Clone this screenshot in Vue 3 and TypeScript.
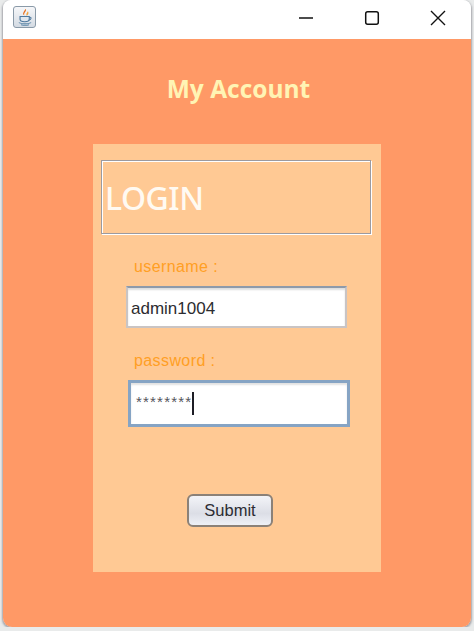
<script setup lang="ts">
const title = 'My Account'
</script>

<template>
  <div class="window">
    <header class="titlebar">
      <div class="app-icon">
        <svg width="18" height="18" viewBox="0 0 16 16">
          <path d="M8.6 0.6C10 3 6.4 3.8 7.4 6.6 4.9 5 7.4 2.8 8.6 0.6Z" fill="#e8701f" />
          <path d="M10.6 2.8C9.8 4.2 8.8 5 9.4 6.8 11 6 11.6 4.2 10.6 2.8Z" fill="#f2a23c" />
          <path d="M3.6 7.6h8.2v2.4c0 1.5-1.4 2.2-4.1 2.2s-4.1-.7-4.1-2.2Z" fill="#dfe6ed" stroke="#4f7a9f" stroke-width="1" />
          <path d="M11.8 8.2c2.2-.4 2.2 2-.4 2.6" fill="none" stroke="#4f7a9f" stroke-width=".9" />
          <path d="M2.5 13c3 1.2 8 1.2 11 0M4.5 14.8c2.4.6 5 .6 7 0" fill="none" stroke="#5c86a8" stroke-width=".9" />
        </svg>
      </div>
      <div class="controls">
        <svg class="ctl-min" width="16" height="16" viewBox="0 0 16 16"><path d="M1 8h14" stroke="#111" stroke-width="1.4" /></svg>
        <svg class="ctl-max" width="16" height="16" viewBox="0 0 16 16"><rect x="1.7" y="1.7" width="12.6" height="12.6" rx="2" fill="none" stroke="#111" stroke-width="1.5" /></svg>
        <svg class="ctl-close" width="16" height="16" viewBox="0 0 16 16"><path d="M1 1l14 14M15 1 1 15" stroke="#111" stroke-width="1.4" /></svg>
      </div>
    </header>

    <main class="content">
      <h1 class="heading">{{ title }}</h1>
      <section class="panel">
        <div class="login-box"><span>LOGIN</span></div>
        <label class="field-label first">username :</label>
        <div class="input user"><span>admin1004</span></div>
        <label class="field-label second">password :</label>
        <div class="input pass"><span class="stars">********</span><i class="caret"></i></div>
        <button class="submit" type="button">Submit</button>
      </section>
    </main>
  </div>
</template>

<style scoped>
.window {
  width: 468px;
  height: 627px;
  margin: 0 3px;
  display: flex;
  flex-direction: column;
  border-radius: 8px 8px 9px 9px;
  overflow: hidden;
  box-shadow: 0 1px 2px 1px rgba(110, 110, 120, 0.55);
}
.titlebar {
  height: 39px;
  flex: none;
  background: #fff;
  display: flex;
  align-items: center;
  justify-content: space-between;
  padding-left: 10px;
}
.app-icon {
  width: 23px;
  height: 22px;
  box-sizing: border-box;
  margin-bottom: 5px;
  border: 1px solid #8a9aa8;
  border-radius: 3px;
  background: linear-gradient(#f6f7f9, #d4dbe3);
  display: flex;
  align-items: center;
  justify-content: center;
}
.controls {
  display: flex;
  align-items: center;
  padding-right: 25px;
  margin-bottom: 4px;
}
.ctl-max { margin-left: 50px; }
.ctl-close { margin-left: 50px; }
.content {
  flex: 1;
  background: #ff9966;
  display: flex;
  flex-direction: column;
  align-items: center;
}
.heading {
  margin: 31px 0 0 3px;
  height: 38px;
  line-height: 38px;
  font-family: "Open Sans", "Noto Sans", sans-serif;
  font-size: 24.5px;
  font-weight: 700;
  color: #fff4b4;
}
.panel {
  width: 288px;
  height: 428px;
  margin: 36px 0 0;
  box-sizing: border-box;
  padding: 16px 0 0 8px;
  background: #ffc994;
  display: flex;
  flex-direction: column;
  align-items: flex-start;
}
.login-box {
  width: 270px;
  height: 74px;
  box-sizing: border-box;
  flex: none;
  border: 1px solid #9d9a9e;
  box-shadow: inset 1px 1px 0 #fff, 1px 1px 0 #fff;
  display: flex;
  align-items: center;
  padding: 0 0 0 3px;
  font-family: "Noto Sans", sans-serif;
  font-size: 32px;
  font-weight: 500;
  color: #fffaf2;
  letter-spacing: -0.5px;
}
.field-label {
  margin-left: 33px;
  height: 20px;
  line-height: 20px;
  font-family: "Liberation Sans", Arial, sans-serif;
  font-size: 16px;
  letter-spacing: 0.4px;
  color: #ff9f24;
}
.first { margin-top: 23px; }
.second { margin-top: 23px; }
.input {
  box-sizing: border-box;
  background: #fff;
  display: flex;
  align-items: center;
  font-family: "Liberation Sans", Arial, sans-serif;
  color: #2c2c30;
}
.user {
  width: 221px;
  height: 42px;
  margin: 9px 0 0 25px;
  padding: 3px 0 0 3px;
  border: 2px solid #c9c4c4;
  border-top-color: #8e9aaa;
  box-shadow: inset 0 2px 2px #ddd;
  font-size: 17px;
}
.pass {
  width: 222px;
  height: 47px;
  margin: 9px 0 0 27px;
  padding-left: 5px;
  border: 3px solid #86a4c4;
  box-shadow: inset 0 2px 2px #e2e2e2;
  font-size: 15px;
  letter-spacing: 1.2px;
}
.stars {
  color: #55555c;
  margin-bottom: 4px;
}
.caret {
  width: 2px;
  height: 23px;
  margin-left: 0;
  background: #1d1d25;
}
.submit {
  width: 86px;
  height: 33px;
  margin: 67px 0 0 86px;
  padding: 0;
  border: 2px solid #8b8178;
  border-radius: 6px;
  background: linear-gradient(#f3f4f8, #dcdee6 60%, #eef0f6);
  font-family: "Liberation Sans", Arial, sans-serif;
  font-size: 16.5px;
  color: #2c2c33;
}
</style>

<style>
html, body {
  margin: 0;
  background: #e9ebeb;
}
</style>
